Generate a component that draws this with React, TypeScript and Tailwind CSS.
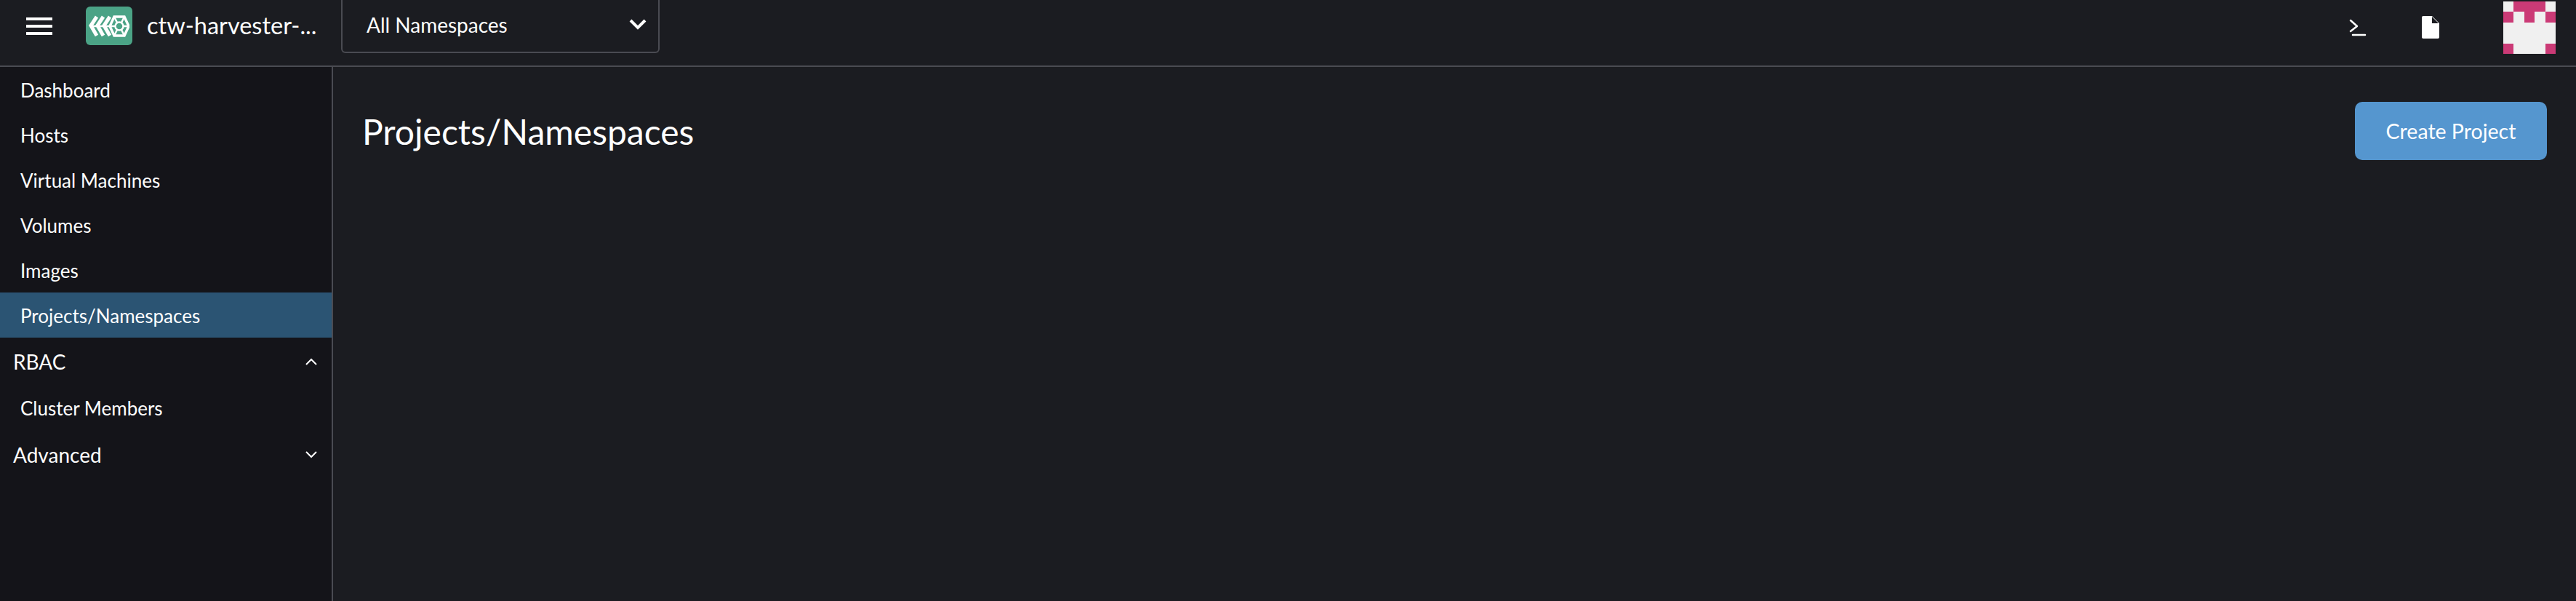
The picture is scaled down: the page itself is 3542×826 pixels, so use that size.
const navItems = ['Dashboard', 'Hosts', 'Virtual Machines', 'Volumes', 'Images', 'Projects/Namespaces'];

// 5x5 identicon, 1 = pink
const avatarCells = [0, 1, 1, 1, 0, 1, 0, 1, 0, 1, 0, 0, 0, 0, 0, 0, 0, 0, 0, 0, 1, 0, 0, 0, 1];

function HarvesterLogo() {
  return (
    <div className="flex h-[53px] w-[64px] items-center justify-center rounded-[6px] bg-[#4ba386]">
      <svg width="56" height="30" viewBox="0 0 56 30" fill="none" stroke="#fff">
        <g strokeWidth="5">
          <path d="M11 2 L3 14 L11 28" />
          <path d="M20 2 L12 14 L20 28" />
          <path d="M29 2 L21 14 L29 28" />
        </g>
        <path d="M3 15 H30" strokeWidth="2.5" />
        <path d="M35 2 H49 L55 15 L49 28 H35 L29 15 Z" strokeWidth="3.5" />
        <circle cx="42" cy="15" r="5.5" strokeWidth="2.5" />
        <path d="M35 2 L39 10 M49 2 L45 10 M55 15 H47 M49 28 L45 20 M35 28 L39 20 M29 15 H37" strokeWidth="2.5" />
      </svg>
    </div>
  );
}

function Avatar() {
  return (
    <div className="mt-[2px] grid h-[72px] w-[72px] grid-cols-5 grid-rows-5">
      {avatarCells.map((cell, i) => (
        <div key={i} className={cell ? 'bg-[#cb3a76]' : 'bg-[#f0f0f0]'} />
      ))}
    </div>
  );
}

function Header() {
  return (
    <header className="flex h-[92px] shrink-0 items-start border-b-2 border-[#4a4b52] bg-[#1b1c21]">
      <button className="mt-[24px] ml-[36px] flex h-[24px] w-[36px] flex-col justify-between">
        <span className="h-[4px] w-full bg-white" />
        <span className="h-[4px] w-full bg-white" />
        <span className="h-[4px] w-full bg-white" />
      </button>
      <div className="mt-[9px] ml-[46px]">
        <HarvesterLogo />
      </div>
      <span className="mt-[13px] ml-[20px] w-[236px] text-[32.5px] leading-[44px] whitespace-nowrap">ctw-harvester-...</span>
      <div className="ml-[31px] flex h-[73px] w-[438px] items-center justify-between rounded-b-[6px] border-x-2 border-b-2 border-[#4a4b52] pr-[16px] pb-[4px] pl-[33px]">
        <span className="text-[28px] leading-[36px]">All Namespaces</span>
        <svg width="24" height="15" viewBox="0 0 24 15" fill="none" stroke="#fff" strokeWidth="4">
          <path d="M2 2 L12 12 L22 2" />
        </svg>
      </div>
      <div className="ml-auto flex items-start">
        <svg className="mt-[26px]" width="24" height="24" viewBox="0 0 24 24" fill="none" stroke="#fff" strokeWidth="2.5" strokeLinecap="round" strokeLinejoin="round">
          <path d="M2 2 L11 10 L2 17" />
          <path d="M5 22 H22" />
        </svg>
        <svg className="mt-[22px] ml-[76px]" width="24" height="31" viewBox="0 0 24 31" fill="#fff">
          <path d="M2 0 H14 L24 10 V29 A2 2 0 0 1 22 31 H2 A2 2 0 0 1 0 29 V2 A2 2 0 0 1 2 0 Z" />
          <path d="M14 1 V10 H23 Z" fill="#1b1c21" />
        </svg>
        <div className="mr-[28px] ml-[88px]">
          <Avatar />
        </div>
      </div>
    </header>
  );
}

function Sidebar() {
  return (
    <aside className="flex w-[458px] shrink-0 flex-col border-r-2 border-[#4a4b52] bg-[#141419]">
      {navItems.map((item) => (
        <div
          key={item}
          className={`flex h-[62px] items-center pt-[2px] pl-[28px] text-[26px] ${item === 'Projects/Namespaces' ? 'bg-[#2b5473]' : ''}`}
        >
          {item}
        </div>
      ))}
      <div className="flex h-[64px] items-center justify-between pt-[2px] pr-[20px] pl-[18px] text-[28px]">
        RBAC
        <svg width="16" height="10" viewBox="0 0 16 10" fill="none" stroke="#fff" strokeWidth="2">
          <path d="M1 9 L8 2 L15 9" />
        </svg>
      </div>
      <div className="flex h-[64px] items-center pt-[2px] pl-[28px] text-[26px]">Cluster Members</div>
      <div className="flex h-[64px] items-center justify-between pt-[2px] pr-[20px] pl-[18px] text-[28px]">
        Advanced
        <svg width="16" height="10" viewBox="0 0 16 10" fill="none" stroke="#fff" strokeWidth="2">
          <path d="M1 1 L8 8 L15 1" />
        </svg>
      </div>
    </aside>
  );
}

export default function App() {
  return (
    <div className="flex h-[826px] w-[3542px] flex-col overflow-hidden bg-[#1b1c21] font-['Lato',sans-serif] text-white">
      <Header />
      <div className="flex min-h-0 flex-1">
        <Sidebar />
        <main className="flex flex-1 items-start justify-between pt-[48px] pr-[40px] pl-[40px]">
          <h1 className="mt-[9px] text-[48px] leading-[64px]">Projects/Namespaces</h1>
          <button className="h-[80px] w-[264px] rounded-[10px] bg-[#5596cf] text-[28.5px]">Create Project</button>
        </main>
      </div>
    </div>
  );
}
